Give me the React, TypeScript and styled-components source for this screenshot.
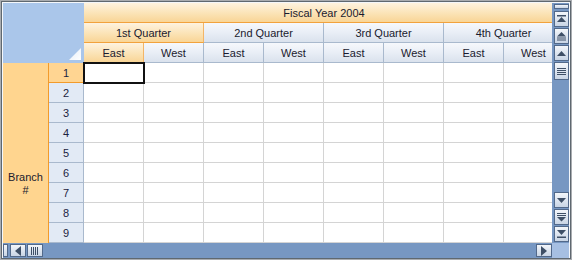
import React from "react";
import styled, { createGlobalStyle, css } from "styled-components";

const GlobalStyle = createGlobalStyle`
  html, body { margin: 0; padding: 0; background: #ffffff; }
  body { font-family: "Liberation Sans", Arial, sans-serif; font-size: 11px; }
`;

const quarters = ["1st Quarter", "2nd Quarter", "3rd Quarter", "4th Quarter"];
const rows = [1, 2, 3, 4, 5, 6, 7, 8, 9];

const orangeHeader = css`
  background: linear-gradient(#fef3df, #fbe3b6 55%, #f9d596);
  border-right: 1px solid #f3b567;
  border-bottom: 1px solid #f2a23c;
`;

const blueHeader = css`
  background: linear-gradient(#f6f8fc, #e9eef6 50%, #dae2ed);
  border-right: 1px solid #a9b9cd;
  border-bottom: 1px solid #a9b9cd;
`;

export default function App() {
  return (
    <>
      <GlobalStyle />
      <Frame>
        <Inner>
          <Viewport>
            <Sheet>
              <Corner>
                <svg width="12" height="12" viewBox="0 0 12 12">
                  <defs>
                    <linearGradient id="tri" x1="0" y1="0" x2="1" y2="1">
                      <stop offset="0" stopColor="#e4ecf7" />
                      <stop offset="1" stopColor="#ffffff" />
                    </linearGradient>
                  </defs>
                  <polygon points="12,0 12,12 0,12" fill="url(#tri)" />
                </svg>
              </Corner>
              <Fiscal>Fiscal Year 2004</Fiscal>
              {quarters.map((q, i) => (
                <Quarter key={q} $active={i === 0} style={{ gridColumn: `${3 + i * 2} / span 2` }}>
                  {q}
                </Quarter>
              ))}
              {quarters.map((q, i) => (
                <React.Fragment key={q + "r"}>
                  <Region $active={i === 0}>East</Region>
                  <Region>West</Region>
                </React.Fragment>
              ))}
              <Branch>
                Branch
                <br />#
              </Branch>
              {rows.map((r) => (
                <React.Fragment key={r}>
                  <RowNum $active={r === 1}>{r}</RowNum>
                  {Array.from({ length: 8 }).map((_, c) => (
                    <Cell key={c} $selected={r === 1 && c === 0} />
                  ))}
                </React.Fragment>
              ))}
            </Sheet>
          </Viewport>

          <VScroll>
            <SplitH />
            <VBtn>
              <svg width="9" height="8" viewBox="0 0 9 8">
                <rect x="0" y="0" width="9" height="1.5" fill="#3e4f66" />
                <polygon points="4.5,2 9,7 0,7" fill="#3e4f66" />
              </svg>
            </VBtn>
            <VBtn>
              <svg width="9" height="9" viewBox="0 0 9 9">
                <polygon points="4.5,0 9,4.5 0,4.5" fill="#3e4f66" />
                <rect x="0" y="5.5" width="9" height="1" fill="#3e4f66" />
                <rect x="0" y="7.5" width="9" height="1" fill="#3e4f66" />
              </svg>
            </VBtn>
            <VBtn>
              <svg width="9" height="5" viewBox="0 0 9 5">
                <polygon points="4.5,0 9,5 0,5" fill="#3e4f66" />
              </svg>
            </VBtn>
            <VThumb>
              <svg width="9" height="7" viewBox="0 0 9 7">
                <rect x="0" y="0" width="9" height="1" fill="#3e4f66" />
                <rect x="0" y="2" width="9" height="1" fill="#3e4f66" />
                <rect x="0" y="4" width="9" height="1" fill="#3e4f66" />
                <rect x="0" y="6" width="9" height="1" fill="#3e4f66" />
              </svg>
            </VThumb>
            <Track />
            <VBtn>
              <svg width="9" height="5" viewBox="0 0 9 5">
                <polygon points="0,0 9,0 4.5,5" fill="#3e4f66" />
              </svg>
            </VBtn>
            <VBtn>
              <svg width="9" height="9" viewBox="0 0 9 9">
                <rect x="0" y="0" width="9" height="1" fill="#3e4f66" />
                <rect x="0" y="2" width="9" height="1" fill="#3e4f66" />
                <polygon points="0,4 9,4 4.5,8.5" fill="#3e4f66" />
              </svg>
            </VBtn>
            <VBtn>
              <svg width="9" height="8" viewBox="0 0 9 8">
                <polygon points="0,0 9,0 4.5,5" fill="#3e4f66" />
                <rect x="0" y="6.5" width="9" height="1.5" fill="#3e4f66" />
              </svg>
            </VBtn>
          </VScroll>

          <HScroll>
            <SplitV />
            <HBtn>
              <svg width="6" height="10" viewBox="0 0 6 10">
                <polygon points="6,0 6,10 0,5" fill="#3e4f66" />
              </svg>
            </HBtn>
            <HThumb>
              <svg width="8" height="8" viewBox="0 0 8 8">
                <rect x="0" y="0" width="1" height="8" fill="#3e4f66" />
                <rect x="2" y="0" width="1" height="8" fill="#3e4f66" />
                <rect x="4" y="0" width="1" height="8" fill="#3e4f66" />
                <rect x="6" y="0" width="1" height="8" fill="#3e4f66" />
              </svg>
            </HThumb>
            <Track />
            <HBtn>
              <svg width="6" height="10" viewBox="0 0 6 10">
                <polygon points="0,0 6,5 0,10" fill="#3e4f66" />
              </svg>
            </HBtn>
          </HScroll>
          <ScrollCorner />
        </Inner>
      </Frame>
    </>
  );
}

const Frame = styled.div`
  width: 572px;
  height: 260px;
  box-sizing: border-box;
  border: 1px solid #a9acb0;
`;

const Inner = styled.div`
  height: 100%;
  box-sizing: border-box;
  border: 1px solid #5f6870;
  padding: 1px 1px 0 1px;
  background: #f4f7fb;
  display: grid;
  grid-template-columns: 549px 17px;
  grid-template-rows: 240px 15px;
`;

const Viewport = styled.div`
  overflow: hidden;
  background: #ffffff;
`;

const Sheet = styled.div`
  display: grid;
  grid-template-columns: 46px 35px repeat(8, 60px);
  grid-template-rows: repeat(12, 20px);
  color: #1a1a2e;
`;

const HeadCell = styled.div`
  box-sizing: border-box;
  display: flex;
  align-items: center;
  justify-content: center;
  white-space: nowrap;
`;

const Corner = styled.div`
  grid-column: 1 / span 2;
  grid-row: 1 / span 3;
  background: #aac6ea;
  display: flex;
  align-items: flex-end;
  justify-content: flex-end;
  padding: 0 3px 3px 0;
  box-sizing: border-box;
`;

const Fiscal = styled(HeadCell)`
  grid-column: 3 / span 8;
  grid-row: 1;
  ${orangeHeader};
  border-right: none;
`;

const Quarter = styled(HeadCell)<{ $active?: boolean }>`
  grid-row: 2;
  ${(p) => (p.$active ? orangeHeader : blueHeader)};
`;

const Region = styled(HeadCell)<{ $active?: boolean }>`
  grid-row: 3;
  ${(p) => (p.$active ? orangeHeader : blueHeader)};
`;

const Branch = styled(HeadCell)`
  grid-column: 1;
  grid-row: 4 / span 9;
  background: #ffd58f;
  border-right: 1px solid #f29b2b;
  text-align: center;
  line-height: 13px;
  white-space: normal;
  padding-top: 62px;
`;

const RowNum = styled(HeadCell)<{ $active?: boolean }>`
  grid-column: 2;
  background: ${(p) => (p.$active ? "#ffd592" : "#e2eaf5")};
  border-right: 1px solid ${(p) => (p.$active ? "#f29b2b" : "#a9b9cd")};
  border-bottom: 1px solid ${(p) => (p.$active ? "#f29b2b" : "#a9b9cd")};
  color: #1b2340;
`;

const Cell = styled.div<{ $selected?: boolean }>`
  box-sizing: border-box;
  border-right: 1px solid #d4d4d4;
  border-bottom: 1px solid #d4d4d4;
  ${(p) =>
    p.$selected &&
    css`
      outline: 2px solid #111111;
      outline-offset: -1px;
      position: relative;
      z-index: 1;
    `}
`;

const btn = css`
  box-sizing: border-box;
  border: 1px solid #52698a;
  background: linear-gradient(#f3f6fa, #dde5f0 50%, #c9d5e5);
  display: flex;
  align-items: center;
  justify-content: center;
  flex-shrink: 0;
`;

const VScroll = styled.div`
  background: #7797c2;
  display: flex;
  flex-direction: column;
  gap: 1px;
  padding: 1px 0 1px 2px;
`;

const SplitH = styled.div`
  ${btn};
  height: 5px;
  margin-bottom: 1px;
`;

const VBtn = styled.div`
  ${btn};
  height: 16px;
`;

const VThumb = styled.div`
  ${btn};
  height: 18px;
`;

const Track = styled.div`
  flex: 1;
`;

const HScroll = styled.div`
  background: #7797c2;
  display: flex;
  gap: 1px;
  padding: 1px 0 1px 0;
`;

const SplitV = styled.div`
  ${btn};
  width: 5px;
  margin-right: 1px;
`;

const HBtn = styled.div`
  ${btn};
  width: 16px;
`;

const HThumb = styled.div`
  ${btn};
  width: 16px;
`;

const ScrollCorner = styled.div`
  background: #a6bfe2;
`;
